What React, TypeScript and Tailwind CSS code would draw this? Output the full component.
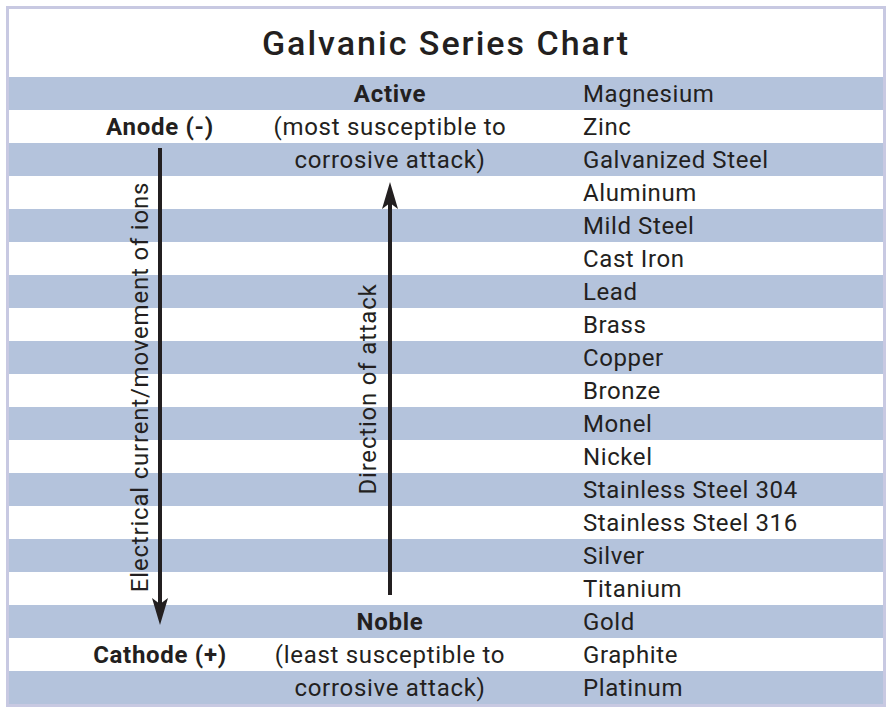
import React from 'react';

const metals = [
  'Magnesium',
  'Zinc',
  'Galvanized Steel',
  'Aluminum',
  'Mild Steel',
  'Cast Iron',
  'Lead',
  'Brass',
  'Copper',
  'Bronze',
  'Monel',
  'Nickel',
  'Stainless Steel 304',
  'Stainless Steel 316',
  'Silver',
  'Titanium',
  'Gold',
  'Graphite',
  'Platinum',
];

// left / middle column labels, keyed by row index
const leftLabels: Record<number, { text: string; bold?: boolean }> = {
  1: { text: 'Anode (-)', bold: true },
  17: { text: 'Cathode (+)', bold: true },
};

const midLabels: Record<number, { text: string; bold?: boolean }> = {
  0: { text: 'Active', bold: true },
  1: { text: '(most susceptible to' },
  2: { text: 'corrosive attack)' },
  16: { text: 'Noble', bold: true },
  17: { text: '(least susceptible to' },
  18: { text: 'corrosive attack)' },
};

const ArrowDown = () => (
  <svg width="20" height="480" viewBox="0 0 20 480" className="block">
    <rect x="8" y="0" width="4" height="460" fill="#231f20" />
    <path d="M2 450 L10 477 L18 450 L10 456 Z" fill="#231f20" />
  </svg>
);

const ArrowUp = () => (
  <svg width="20" height="416" viewBox="0 0 20 416" className="block">
    <rect x="8" y="20" width="4" height="396" fill="#231f20" />
    <path d="M2 30 L10 3 L18 30 L10 24 Z" fill="#231f20" />
  </svg>
);

export default function App() {
  return (
    <div className="bg-white w-[893px] h-[714px] pt-[6px] pl-[6px]" style={{ fontFamily: 'Roboto, "Liberation Sans", sans-serif' }}>
      <div className="w-[880px] h-[701px] border-[3px] border-[#c8c9e2] bg-white text-[#231f20]">
        <div className="h-[68px] flex items-center justify-center">
          <h1 className="text-[34px] font-medium tracking-[2px] leading-none">Galvanic Series Chart</h1>
        </div>

        <div className="relative">
          {metals.map((m, i) => (
            <div
              key={m}
              className={`grid grid-cols-[302px_158px_1fr] h-[33px] items-center text-[24px] leading-none tracking-[0.7px] ${i % 2 === 0 ? 'bg-[#b4c3dc]' : 'bg-white'}`}
            >
              <div className="flex justify-center whitespace-nowrap">
                {leftLabels[i] && <span className={leftLabels[i].bold ? 'font-bold' : ''}>{leftLabels[i].text}</span>}
              </div>
              <div className="flex justify-center whitespace-nowrap">
                {midLabels[i] && <span className={midLabels[i].bold ? 'font-bold' : ''}>{midLabels[i].text}</span>}
              </div>
              <div className="pl-[114px] whitespace-nowrap tracking-[0.6px]">{m}</div>
            </div>
          ))}

          {/* arrows + vertical captions sit over the stripes */}
          <div className="absolute left-[141px] top-[71px]">
            <ArrowDown />
          </div>
          <div className="absolute left-[371px] top-[102px]">
            <ArrowUp />
          </div>
          <div className="absolute left-[131px] top-[310px] w-0 h-0 flex items-center justify-center">
            <span className="-rotate-90 whitespace-nowrap text-[24px] leading-none tracking-[0.8px]">Electrical current/movement of ions</span>
          </div>
          <div className="absolute left-[359px] top-[312px] w-0 h-0 flex items-center justify-center">
            <span className="-rotate-90 whitespace-nowrap text-[24px] leading-none tracking-[0.8px]">Direction of attack</span>
          </div>
        </div>
      </div>
    </div>
  );
}
